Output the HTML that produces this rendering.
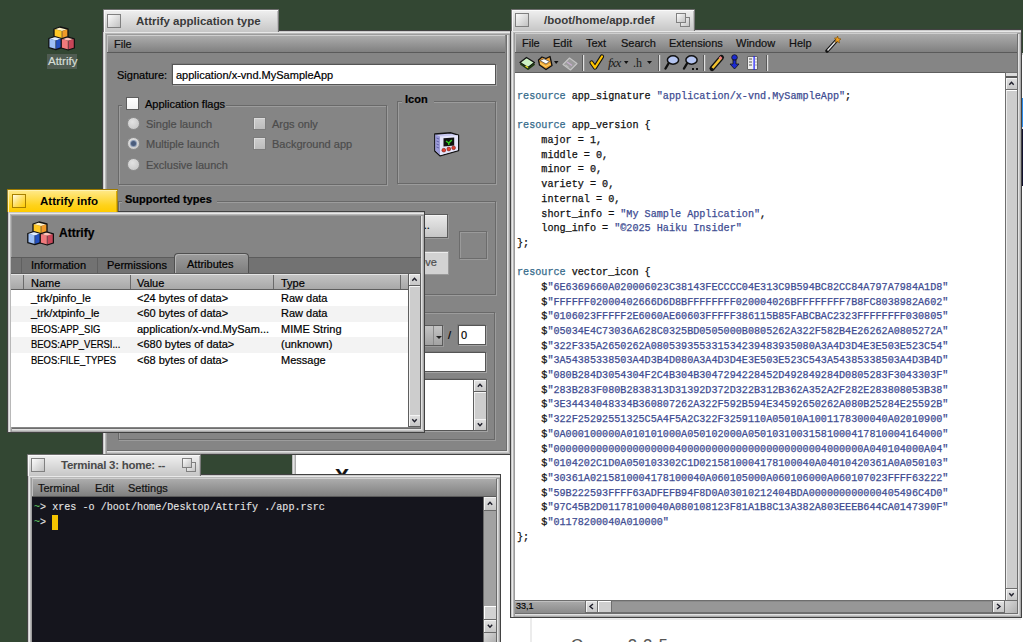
<!DOCTYPE html>
<html><head><meta charset="utf-8">
<style>
*{box-sizing:border-box;margin:0;padding:0}
html,body{width:1023px;height:642px;overflow:hidden;background:#334733;font-family:"Liberation Sans",sans-serif;font-size:11px;color:#000}
.a{position:absolute}
.t{position:absolute;white-space:nowrap;line-height:13px;padding-top:1px;-webkit-text-stroke:0.2px currentColor}
.mono{font-family:"Liberation Mono",monospace}
.tab{position:absolute;background:linear-gradient(#f0f0f0,#c6c6c6);border:1px solid rgba(0,0,0,.45);border-bottom:none;box-shadow:inset 1px 1px 0 #fafafa,inset -1px 0 0 #bdbdbd}
.tab.act{background:linear-gradient(#ffe98c,#ffd21a 70%,#ffcb00);border-color:rgba(60,40,0,.5);box-shadow:inset 1px 1px 0 #fff2b0,inset -1px 0 0 #e0b000}
.close{position:absolute;width:14px;height:14px;border:1px solid #808080;background:linear-gradient(135deg,#fbfbfb,#c2c2c2)}
.act .close{border-color:#a88000;background:linear-gradient(135deg,#fffce8,#ffe066 50%,#ffcc00)}
.ttl{position:absolute;font-weight:bold;font-size:11.5px;color:#3a3a3a;white-space:nowrap;line-height:14px}
.zoom{position:absolute;width:15px;height:15px}
.zoom i{position:absolute;border:1px solid #808080;background:linear-gradient(135deg,#fbfbfb,#c2c2c2)}
.frame{position:absolute;background:#858585;border:1px solid rgba(0,0,0,.5);
 box-shadow:inset 1px 1px 0 #cacaca,inset 2px 2px 0 #e8e8e8,inset 3px 3px 0 #b8b8b8,inset 4px 4px 0 #9c9c9c,
 inset -1px -1px 0 #a8a8a8,inset -2px -2px 0 #c6c6c6,inset -3px -3px 0 #e2e2e2,inset -4px -4px 0 #6e6e6e}
.menubar{position:absolute;background:linear-gradient(#acacac,#808080);border-top:1px solid #cfcfcf;border-bottom:1px solid #5a5a5a;box-shadow:inset 1px 0 0 #c0c0c0;white-space:nowrap}
.menubar span{position:absolute;top:2px;font-size:11px;line-height:14px;color:#111;-webkit-text-stroke:0.2px currentColor}
.gbox{position:absolute;border:1px solid #696969;box-shadow:1px 1px 0 #9c9c9c,inset 1px 1px 0 #9c9c9c}
.cb{position:absolute;width:13px;height:13px;border:1px solid #5e5e5e;background:linear-gradient(#fff,#f2f2f2)}
.cbd{position:absolute;width:13px;height:13px;border:1px solid #7c7c7c;background:linear-gradient(#cdcdcd,#bcbcbc);box-shadow:inset 1px 1px 0 #dcdcdc}
.radio{position:absolute;width:13px;height:13px;border-radius:50%;background:radial-gradient(circle at 40% 35%,#e2e2e2,#c2c2c2);border:1px solid #8e8e8e}
.tf{position:absolute;background:#fff;border:1px solid #555;box-shadow:1px 1px 0 #a4a4a4,-1px -1px 0 #7a7a7a}
.dim{color:#4c4c4c}
.btn{position:absolute;background:linear-gradient(#eaeaea,#c6c6c6);border:1px solid #5c5c5c;box-shadow:1px 1px 0 #9a9a9a,inset 1px 1px 0 #f6f6f6}
.btn span{position:absolute;top:5px;line-height:13px;white-space:nowrap;-webkit-text-stroke:0.2px currentColor}
.btn.dis span{color:#4e4e4e}
.kw{color:#356a8a}
.st{color:#3e4c92}
.sarr{position:absolute;background:linear-gradient(#e2e2e2,#c6c6c6);box-shadow:inset 1px 1px 0 #f4f4f4}
.sarr svg{position:absolute;left:0;top:0}
</style></head><body>
<div class="a" style="left:48px;top:26px"><svg width="27" height="26" viewBox="0 0 27 26"><polygon points="6.0,3.0 12.0,1.0 20.0,3.0 14.0,5.0" fill="#fff2c8"/><polygon points="6.0,3.0 14.0,5.0 14.0,14.2 6.0,12.2" fill="#ffc824"/><polygon points="14.0,5.0 20.0,3.0 20.0,12.2 14.0,14.2" fill="#f09a28"/><path d="M14,5 V14.2" stroke="#333" stroke-width="0.6"/><polygon points="6.0,3.0 12.0,1.0 20.0,3.0 20.0,12.2 14.0,14.2 6.0,12.2" fill="none" stroke="#111" stroke-width="1.3" stroke-linejoin="round"/><polygon points="0.8,12.5 6.8,10.5 13.8,12.5 7.8,14.5" fill="#e0ecff"/><polygon points="0.8,12.5 7.8,14.5 7.8,23.7 0.8,21.7" fill="#9ec0f6"/><polygon points="7.8,14.5 13.8,12.5 13.8,21.7 7.8,23.7" fill="#2350c0"/><path d="M7.8,14.5 V23.7" stroke="#333" stroke-width="0.6"/><polygon points="0.8,12.5 6.8,10.5 13.8,12.5 13.8,21.7 7.8,23.7 0.8,21.7" fill="none" stroke="#111" stroke-width="1.3" stroke-linejoin="round"/><polygon points="13.2,12.8 19.4,10.8 26.4,12.8 20.2,14.8" fill="#ffc4b8"/><polygon points="13.2,12.8 20.2,14.8 20.2,24.0 13.2,22.0" fill="#f07a7c"/><polygon points="20.2,14.8 26.4,12.8 26.4,22.0 20.2,24.0" fill="#c84658"/><path d="M20.2,14.8 V24.0" stroke="#333" stroke-width="0.6"/><polygon points="13.2,12.8 19.4,10.8 26.4,12.8 26.4,22.0 20.2,24.0 13.2,22.0" fill="none" stroke="#111" stroke-width="1.3" stroke-linejoin="round"/></svg></div>
<div class="a" style="left:47px;top:54px;width:30px;height:15px;background:#505c52"></div>
<div class="t" style="left:48px;top:54px;color:#d6ded6;font-size:11.5px">Attrify</div>
<div class="a" style="left:292px;top:454px;width:731px;height:188px;background:#fff"></div>
<div class="a" style="left:292px;top:454px;width:4px;height:188px;background:linear-gradient(90deg,#a0a0a0,#e8e8e8,#c8c8c8,#9a9a9a)"></div>
<div class="a" style="left:560px;top:618px;width:463px;height:2px;background:#ececec"></div>
<div class="a" style="left:530px;top:618px;width:2px;height:24px;background:#ececec"></div>
<div class="t" style="left:571px;top:636px;font-size:16px;color:#555;line-height:18px">O</div>
<div class="t" style="left:628px;top:636px;font-size:16px;color:#555;line-height:18px;letter-spacing:1px">3.3.5</div>
<div class="t" style="left:335px;top:465px;font-size:21px;font-weight:bold;color:#111;line-height:20px">X</div>
<div class="a" style="left:1021px;top:53px;width:2px;height:2px;background:#cfcfcf"></div>
<div class="a" style="left:1021px;top:55px;width:2px;height:43px;background:#fff"></div>
<div class="a" style="left:1021px;top:98px;width:2px;height:29px;background:#2a8ae8"></div>
<div class="a" style="left:1021px;top:127px;width:2px;height:2px;background:#dde"></div>
<div class="a" style="left:1021px;top:129px;width:2px;height:57px;background:#12122e"></div>
<div class="a" style="left:1021px;top:186px;width:2px;height:456px;background:#fff"></div>
<div class="frame" style="left:102px;top:30px;width:409px;height:425px;"></div>
<div class="tab" style="left:103px;top:9px;width:176px;height:23px"><div class="close" style="left:3px;top:4px"></div><div class="ttl" style="left:32px;top:4px">Attrify application type</div></div>
<div class="menubar" style="left:107px;top:35px;width:398px;height:18px"><span style="left:7px;top:1px">File</span></div>
<div class="t" style="left:117px;top:68px;">Signature:</div>
<div class="tf" style="left:172px;top:64px;width:324px;height:21px;"></div>
<div class="t" style="left:176px;top:68px;">application/x-vnd.MySampleApp</div>
<div class="gbox" style="left:118px;top:105px;width:269px;height:80px;"></div>
<div class="a" style="left:122px;top:98px;width:104px;height:14px;background:#858585"></div>
<div class="cb" style="left:126px;top:97px;width:13px;height:13px;"></div>
<div class="t" style="left:145px;top:97px;">Application flags</div>
<div class="radio" style="left:127px;top:117px;width:13px;height:13px;"></div>
<div class="t dim" style="left:146px;top:117px;">Single launch</div>
<div class="radio" style="left:127px;top:137px;width:13px;height:13px;"><i style="position:absolute;left:3px;top:3px;width:5px;height:5px;border-radius:50%;background:#4a5c7c;box-shadow:0 0 0 1px #8a9ab4"></i></div>
<div class="t dim" style="left:146px;top:137px;">Multiple launch</div>
<div class="radio" style="left:127px;top:158px;width:13px;height:13px;"></div>
<div class="t dim" style="left:146px;top:158px;">Exclusive launch</div>
<div class="cbd" style="left:253px;top:117px;width:13px;height:13px;"></div>
<div class="t dim" style="left:272px;top:117px;">Args only</div>
<div class="cbd" style="left:253px;top:137px;width:13px;height:13px;"></div>
<div class="t dim" style="left:272px;top:137px;">Background app</div>
<div class="gbox" style="left:397px;top:101px;width:99px;height:83px;"></div>
<div class="a" style="left:402px;top:92px;width:32px;height:14px;background:#858585"></div>
<div class="t" style="left:405px;top:92px;font-weight:bold">Icon</div>
<div class="a" style="left:434px;top:132px"><svg width="26" height="26" viewBox="0 0 26 26">
<polygon points="0.8,2 17,0.8 24.5,3.2 24.5,18.5 6,23.8 0.8,19" fill="#c8c8f0" stroke="#111" stroke-width="1.4" stroke-linejoin="round"/>
<polygon points="6,4.5 24,3.2 24,18.3 6,23.3" fill="#e6e6fa"/>
<polygon points="1.3,2.4 6,4.5 6,23 1.3,18.6" fill="#9c9cd8"/>
<path d="M2.5,6 l2.5,1 M2.5,9 l2.5,1 M2.5,12 l2.5,1 M2.5,15 l2.5,1" stroke="#5a5aa0" stroke-width="0.9"/>
<polygon points="9.5,6.2 20.2,5.6 20.2,13.4 9.5,14.6" fill="#111"/>
<path d="M12,9 L14.8,11 L17.8,8 M14.8,11 L14.8,13" stroke="#32d020" stroke-width="1.4" fill="none"/>
<circle cx="9.8" cy="18.2" r="1.9" fill="#e04030" stroke="#601010" stroke-width="0.5"/>
<circle cx="14.8" cy="17" r="1.9" fill="#e04030" stroke="#601010" stroke-width="0.5"/>
<circle cx="19.6" cy="15.8" r="1.9" fill="#e04030" stroke="#601010" stroke-width="0.5"/>
</svg></div>
<div class="gbox" style="left:118px;top:201px;width:378px;height:94px;"></div>
<div class="a" style="left:122px;top:192px;width:95px;height:14px;background:#858585"></div>
<div class="t" style="left:125px;top:192px;font-weight:bold">Supported types</div>
<div class="gbox" style="left:118px;top:312px;width:377px;height:128px;"></div>
<div class="btn" style="left:369px;top:214px;width:79px;height:24px"><span style="left:31px;top:4px">Add...</span></div>
<div class="btn dis" style="left:369px;top:251px;width:80px;height:24px;background:#d2d2d2;border-color:#9a9a9a;box-shadow:inset 1px 1px 0 #ececec"><span style="left:26px;top:4px">Remove</span></div>
<div class="a" style="left:459px;top:231px;width:28px;height:28px;border:1px solid #6c6c6c;box-shadow:1px 1px 0 #9a9a9a, inset 1px 1px 0 #9a9a9a"></div>
<div class="a" style="left:300px;top:325px;width:143px;height:21px;background:linear-gradient(#c4c4c4,#a2a2a2);border:1px solid #5a5a5a;box-shadow:1px 1px 0 #9a9a9a"></div>
<div class="a" style="left:433px;top:326px;width:1px;height:19px;background:#8a8a8a"></div>
<div class="a" style="left:436px;top:336px;width:0px;height:0px;border-left:3px solid transparent;border-right:3px solid transparent;border-top:3px solid #222"></div>
<div class="t" style="left:448px;top:328px;">/</div>
<div class="tf" style="left:458px;top:325px;width:28px;height:20px;"></div>
<div class="t" style="left:461px;top:328px;">0</div>
<div class="tf" style="left:300px;top:352px;width:186px;height:20px;"></div>
<div class="tf" style="left:300px;top:379px;width:187px;height:52px;"></div>
<div class="a" style="left:473px;top:379px;width:14px;height:52px;background:#5e5e5e"></div>
<div class="sarr" style="left:474px;top:380px;width:12px;height:11px;"><svg width="12" height="11"><path d="M3.8,6.8 L6.0,4.3 L8.2,6.8" stroke="#1e1e2a" stroke-width="1.4" fill="none"/></svg></div>
<div class="a" style="left:474px;top:392px;width:12px;height:27px;background:#cdcdcd;border-top:1px solid #f6f6f6;border-left:1px solid #f0f0f0"></div>
<div class="sarr" style="left:474px;top:419px;width:12px;height:11px;"><svg width="12" height="11"><path d="M3.8,4.2 L6.0,6.7 L8.2,4.2" stroke="#1e1e2a" stroke-width="1.4" fill="none"/></svg></div>
<div class="frame" style="left:510px;top:29px;width:512px;height:589px;"></div>
<div class="tab" style="left:511px;top:9px;width:184px;height:22px"><div class="close" style="left:3px;top:3px"></div><div class="ttl" style="left:32px;top:3px">/boot/home/app.rdef</div><div class="zoom" style="left:164px;top:3px"><i style="left:4px;top:4px;width:10px;height:10px"></i><i style="left:0;top:0;width:10px;height:10px"></i></div></div>
<div class="menubar" style="left:515px;top:33px;width:502px;height:20px"><span style="left:7px">File</span><span style="left:38px">Edit</span><span style="left:71px">Text</span><span style="left:106px">Search</span><span style="left:154px">Extensions</span><span style="left:221px">Window</span><span style="left:274px">Help</span></div>
<div class="a" style="left:515px;top:53px;width:502px;height:20px;background:#858585;border-bottom:1px solid #5e5e5e"></div>
<div class="a" style="left:515px;top:73px;width:490px;height:527px;background:#fff"></div>
<svg class="a" style="left:516px;top:53px" width="501" height="20" viewBox="0 0 501 20">
<g stroke-linejoin="round">
<polygon points="4,9.5 10.5,4.5 18.5,9.5 12,14.5" fill="#cdf2c4" stroke="#111" stroke-width="1.3"/>
<path d="M4.5,10.8 L12,16 L18.5,11" stroke="#1e3a10" stroke-width="1.8" fill="none"/>
<path d="M9.5,13 L12,14.8" stroke="#f0e020" stroke-width="1.4"/>
<path d="M22.5,7 L26,4 L30,5.5 L34,3.5 L36,12.5 L30,16.5 L23.5,12 Z" fill="#eda032" stroke="#111" stroke-width="1.3"/>
<path d="M24,7.5 L28,5.8 L33.5,8.5 L30,11 Z" fill="#fff" stroke="#444" stroke-width="0.7"/>
<path d="M24,10 L29.5,13.5 L34.5,11" stroke="#ffd060" stroke-width="1.2" fill="none"/>
<polygon points="38,8 42.5,8 40.2,11" fill="#111"/>
<polygon points="47,11.5 53.5,5 61,10.5 54.5,17" fill="#9c9c9c" stroke="#c4c4c4" stroke-width="1.1"/>
<path d="M51,9 L56,12.5" stroke="#c8b0d0" stroke-width="1.4"/><path d="M49.5,12 L52.5,14.5" stroke="#bcbcbc" stroke-width="1.4"/>
<rect x="66" y="2" width="1" height="16" fill="#5a5a5a"/><rect x="67" y="2" width="1.2" height="16" fill="#e0e0e0"/>
<path d="M75.5,9.5 L79,14.5 L86,3.5" stroke="#111" stroke-width="4.2" fill="none" stroke-linecap="round"/>
<path d="M75.5,9.5 L79,14.5 L86,3.5" stroke="#ffc400" stroke-width="2.2" fill="none" stroke-linecap="round"/>
<text x="92" y="14" font-family="Liberation Serif" font-style="italic" font-size="13" fill="#1a1a1a" letter-spacing="-1">fxx</text>
<polygon points="108,8 112.5,8 110.2,11" fill="#111"/>
<text x="117" y="14" font-family="Liberation Serif" font-size="12" fill="#1a1a1a">.h</text>
<polygon points="131,8 136,8 133.5,11" fill="#111"/>
<rect x="142" y="2" width="1" height="16" fill="#5a5a5a"/><rect x="143" y="2" width="1.2" height="16" fill="#e0e0e0"/>
<ellipse cx="157" cy="7" rx="5.6" ry="4.2" fill="#b4c4f0" stroke="#111" stroke-width="1.5"/>
<path d="M152.5,10.5 L149.5,15.5" stroke="#111" stroke-width="2.4" stroke-linecap="round"/>
<ellipse cx="175.5" cy="7" rx="5.6" ry="4.2" fill="#b4c4f0" stroke="#111" stroke-width="1.5"/>
<path d="M171,10.5 L168,15.5" stroke="#111" stroke-width="2.4" stroke-linecap="round"/>
<rect x="176" y="15" width="2" height="2" fill="#111"/><rect x="180" y="15" width="2" height="2" fill="#111"/>
<rect x="187" y="2" width="1" height="16" fill="#5a5a5a"/><rect x="188" y="2" width="1.2" height="16" fill="#e0e0e0"/>
<path d="M196,15.5 L205.5,4.5" stroke="#111" stroke-width="5" stroke-linecap="round"/>
<path d="M196.5,15 L205,5" stroke="#f4c430" stroke-width="2.6"/>
<path d="M203.5,6 L205.5,4" stroke="#f08080" stroke-width="2.6"/>
<circle cx="218.5" cy="4.5" r="2.8" fill="#1a2ad0" stroke="#111" stroke-width="0.8"/>
<path d="M217,7 L220,7 L220,11 L223,11 L218.5,16 L214,11 L217,11 Z" fill="#1a2ad0" stroke="#111" stroke-width="0.8"/>
<rect x="231.5" y="3.5" width="10" height="13" fill="#efefef" stroke="#666" stroke-width="1"/>
<path d="M233,6 h3 M233,9 h3 M233,12 h3 M239.5,6 h1 M239.5,9 h1 M239.5,12 h1" stroke="#555" stroke-width="1"/>
<rect x="237.5" y="3" width="1.2" height="14" fill="#2020ff"/>
<rect x="250" y="2" width="1" height="16" fill="#5a5a5a"/><rect x="251" y="2" width="1.2" height="16" fill="#e0e0e0"/>
</g></svg>
<svg class="a" style="left:824px;top:35px" width="20" height="18" viewBox="0 0 20 18">
<path d="M3,16 L13,5" stroke="#111" stroke-width="3.4" stroke-linecap="round"/>
<path d="M3.5,15.5 L12.5,5.5" stroke="#e8e8e8" stroke-width="1.4"/>
<path d="M13.5,1 L14.5,3.5 L17,4 L15,5.5 L15.5,8 L13.5,6.5 L11,7.5 L12,5 L10.5,3 L13,3 Z" fill="#f0a020" stroke="#7a4a00" stroke-width="0.6"/>
</svg>
<pre class="a mono" style="left:517px;top:90px;font-size:10.14px;line-height:14.69px;color:#111;-webkit-text-stroke:0.25px currentColor"><span class="kw">resource</span> app_signature <span class="st">&quot;application/x-vnd.MySampleApp&quot;</span>;

<span class="kw">resource</span> app_version {
    major = 1,
    middle = 0,
    minor = 0,
    variety = 0,
    internal = 0,
    short_info = <span class="st">&quot;My Sample Application&quot;</span>,
    long_info = <span class="st">&quot;©2025 Haiku Insider&quot;</span>
};

<span class="kw">resource</span> vector_icon {
    $<span class="st">&quot;6E6369660A020006023C38143FECCCC04E313C9B594BC82CC84A797A7984A1D8&quot;</span>
    $<span class="st">&quot;FFFFFF02000402666D6D8BFFFFFFFF020004026BFFFFFFFF7B8FC8038982A602&quot;</span>
    $<span class="st">&quot;0106023FFFFF2E6060AE60603FFFFF386115B85FABCBAC2323FFFFFFFF030805&quot;</span>
    $<span class="st">&quot;05034E4C73036A628C0325BD0505000B0805262A322F582B4E26262A0805272A&quot;</span>
    $<span class="st">&quot;322F335A2650262A080539355331534239483935080A3A4D3D4E3E503E523C54&quot;</span>
    $<span class="st">&quot;3A54385338503A4D3B4D080A3A4D3D4E3E503E523C543A54385338503A4D3B4D&quot;</span>
    $<span class="st">&quot;080B284D3054304F2C4B304B3047294228452D492849284D0805283F3043303F&quot;</span>
    $<span class="st">&quot;283B283F080B2838313D31392D372D322B312B362A352A2F282E283808053B38&quot;</span>
    $<span class="st">&quot;3E34434048334B360807262A322F592B594E34592650262A080B25284E25592B&quot;</span>
    $<span class="st">&quot;322F25292551325C5A4F5A2C322F3259110A05010A1001178300040A02010900&quot;</span>
    $<span class="st">&quot;0A000100000A010101000A050102000A05010310031581000417810004164000&quot;</span>
    $<span class="st">&quot;000000000000000000004000000000000000000000004000000A040104000A04&quot;</span>
    $<span class="st">&quot;0104202C1D0A050103302C1D0215810004178100040A04010420361A0A050103&quot;</span>
    $<span class="st">&quot;30361A0215810004178100040A060105000A060106000A060107023FFFF63222&quot;</span>
    $<span class="st">&quot;59B222593FFFF63ADFEFB94F8D0A03010212404BDA000000000000405496C4D0&quot;</span>
    $<span class="st">&quot;97C45B2D01178100040A080108123F81A1B8C13A382A803EEEB644CA0147390F&quot;</span>
    $<span class="st">&quot;01178200040A010000&quot;</span>
};</pre>
<div class="a" style="left:1005px;top:72px;width:12px;height:529px;background:#6e6e6e"></div>
<div class="a" style="left:1006px;top:73px;width:11px;height:3px;background:#dcdcdc"></div>
<div class="a" style="left:1006px;top:76px;width:11px;height:2px;background:#5a5a5a"></div>
<div class="sarr" style="left:1006px;top:78px;width:11px;height:11px;"><svg width="11" height="11"><path d="M3.3,6.8 L5.5,4.3 L7.7,6.8" stroke="#1e1e2a" stroke-width="1.4" fill="none"/></svg></div>
<div class="a" style="left:1006px;top:90px;width:11px;height:498px;background:#cdcdcd;border-top:1px solid #fff;border-left:1px solid #ececec"></div>
<div class="sarr" style="left:1006px;top:589px;width:11px;height:11px;"><svg width="11" height="11"><path d="M3.3,4.2 L5.5,6.7 L7.7,4.2" stroke="#1e1e2a" stroke-width="1.4" fill="none"/></svg></div>
<div class="a" style="left:515px;top:600px;width:502px;height:13px;background:#6e6e6e"></div>
<div class="a" style="left:515px;top:601px;width:70px;height:12px;background:linear-gradient(#a8a8a8,#8a8a8a);border-top:1px solid #c0c0c0"></div>
<div class="t" style="left:516px;top:601px;font-size:9px;line-height:11px;padding-top:0">33,1</div>
<div class="sarr" style="left:586px;top:601px;width:11px;height:11px;"><svg width="11" height="11"><path d="M7.0,3.0 L4.0,5.5 L7.0,8.0" stroke="#1e1e2a" stroke-width="1.4" fill="none"/></svg></div>
<div class="a" style="left:598px;top:601px;width:13px;height:11px;background:#cfcfcf;border-top:1px solid #fff;border-left:1px solid #fff"></div>
<div class="a" style="left:612px;top:601px;width:380px;height:11px;background:#979797;border-top:1px solid #8a8a8a"></div>
<div class="sarr" style="left:993px;top:601px;width:11px;height:11px;"><svg width="11" height="11"><path d="M4.0,3.0 L7.0,5.5 L4.0,8.0" stroke="#1e1e2a" stroke-width="1.4" fill="none"/></svg></div>
<div class="a" style="left:1005px;top:601px;width:12px;height:12px;background:linear-gradient(135deg,#dadada,#b0b0b0)"></div>
<div class="frame" style="left:27px;top:474px;width:474px;height:180px;"></div>
<div class="tab" style="left:27px;top:454px;width:174px;height:22px"><div class="close" style="left:3px;top:3px"></div><div class="ttl" style="left:33px;top:3px;color:#4a4a4a;letter-spacing:-0.25px">Terminal 3: home: --</div><div class="zoom" style="left:154px;top:3px"><i style="left:4px;top:4px;width:10px;height:10px"></i><i style="left:0;top:0;width:10px;height:10px"></i></div></div>
<div class="menubar" style="left:32px;top:478px;width:464px;height:19px"><span style="left:6px">Terminal</span><span style="left:63px">Edit</span><span style="left:96px">Settings</span></div>
<div class="a" style="left:32px;top:497px;width:452px;height:145px;background:#15151d"></div>
<pre class="a mono" style="left:34px;top:501px;font-size:10.1px;line-height:14.7px;color:#e6e6e6;-webkit-text-stroke:0.1px currentColor"><span style="color:#5fbf5f">~</span>&gt; xres -o /boot/home/Desktop/Attrify ./app.rsrc
<span style="color:#5fbf5f">~</span>&gt; </pre>
<div class="a" style="left:52px;top:515px;width:6px;height:15px;background:#f4c400"></div>
<div class="a" style="left:483px;top:497px;width:14px;height:145px;background:#6a6a6a"></div>
<div class="sarr" style="left:484px;top:497px;width:12px;height:13px;"><svg width="12" height="13"><path d="M3.8,7.8 L6.0,5.3 L8.2,7.8" stroke="#1e1e2a" stroke-width="1.4" fill="none"/></svg></div>
<div class="a" style="left:484px;top:511px;width:12px;height:95px;background:#a2a2a2"></div>
<div class="a" style="left:484px;top:606px;width:12px;height:13px;background:#d2d2d2;border-top:1px solid #fff;border-left:1px solid #fff"></div>
<div class="sarr" style="left:484px;top:620px;width:12px;height:12px;"><svg width="12" height="12"><path d="M3.8,4.7 L6.0,7.2 L8.2,4.7" stroke="#1e1e2a" stroke-width="1.4" fill="none"/></svg></div>
<div class="a" style="left:484px;top:633px;width:12px;height:9px;background:linear-gradient(135deg,#d8d8d8,#b0b0b0)"></div>
<div class="frame" style="left:7px;top:211px;width:418px;height:222px;"></div>
<div class="tab act" style="left:7px;top:189px;width:111px;height:23px"><div class="close" style="left:4px;top:4px"></div><div class="ttl" style="left:32px;top:4px;color:#000">Attrify info</div></div>
<div class="a" style="left:12px;top:216px;width:408px;height:41px;background:#858585"></div>
<div class="a" style="left:27px;top:221px"><svg width="27" height="26" viewBox="0 0 27 26"><polygon points="6.0,3.0 12.0,1.0 20.0,3.0 14.0,5.0" fill="#fff2c8"/><polygon points="6.0,3.0 14.0,5.0 14.0,14.2 6.0,12.2" fill="#ffc824"/><polygon points="14.0,5.0 20.0,3.0 20.0,12.2 14.0,14.2" fill="#f09a28"/><path d="M14,5 V14.2" stroke="#333" stroke-width="0.6"/><polygon points="6.0,3.0 12.0,1.0 20.0,3.0 20.0,12.2 14.0,14.2 6.0,12.2" fill="none" stroke="#111" stroke-width="1.3" stroke-linejoin="round"/><polygon points="0.8,12.5 6.8,10.5 13.8,12.5 7.8,14.5" fill="#e0ecff"/><polygon points="0.8,12.5 7.8,14.5 7.8,23.7 0.8,21.7" fill="#9ec0f6"/><polygon points="7.8,14.5 13.8,12.5 13.8,21.7 7.8,23.7" fill="#2350c0"/><path d="M7.8,14.5 V23.7" stroke="#333" stroke-width="0.6"/><polygon points="0.8,12.5 6.8,10.5 13.8,12.5 13.8,21.7 7.8,23.7 0.8,21.7" fill="none" stroke="#111" stroke-width="1.3" stroke-linejoin="round"/><polygon points="13.2,12.8 19.4,10.8 26.4,12.8 20.2,14.8" fill="#ffc4b8"/><polygon points="13.2,12.8 20.2,14.8 20.2,24.0 13.2,22.0" fill="#f07a7c"/><polygon points="20.2,14.8 26.4,12.8 26.4,22.0 20.2,24.0" fill="#c84658"/><path d="M20.2,14.8 V24.0" stroke="#333" stroke-width="0.6"/><polygon points="13.2,12.8 19.4,10.8 26.4,12.8 26.4,22.0 20.2,24.0 13.2,22.0" fill="none" stroke="#111" stroke-width="1.3" stroke-linejoin="round"/></svg></div>
<div class="t" style="left:59px;top:226px;font-weight:bold;font-size:12px">Attrify</div>
<div class="a" style="left:11px;top:257px;width:410px;height:17px;background:#727272;border-top:1px solid #5c5c5c"></div>
<div class="a" style="left:21px;top:258px;width:1px;height:16px;background:#606060"></div>
<div class="a" style="left:97px;top:258px;width:1px;height:16px;background:#606060"></div>
<div class="t" style="left:31px;top:258px;">Information</div>
<div class="t" style="left:107px;top:258px;">Permissions</div>
<div class="a" style="left:174px;top:253px;width:75px;height:21px;border:1px solid #505050;border-bottom:none;border-radius:4px 4px 0 0;background:linear-gradient(#9c9c9c,#7c7c7c);box-shadow:inset 1px 1px 0 #b4b4b4"></div>
<div class="t" style="left:187px;top:257px;">Attributes</div>
<div class="a" style="left:11px;top:273px;width:398px;height:17px;background:linear-gradient(#c4c4c4,#a8a8a8);border-top:1px solid #5e5e5e;box-shadow:inset 0 1px 0 #e4e4e4;border-bottom:1px solid #5e5e5e"></div>
<div class="a" style="left:23px;top:275px;width:1px;height:14px;background:#6a6a6a"></div>
<div class="a" style="left:130px;top:275px;width:1px;height:14px;background:#6a6a6a"></div>
<div class="a" style="left:273px;top:275px;width:1px;height:14px;background:#6a6a6a"></div>
<div class="a" style="left:400px;top:275px;width:1px;height:14px;background:#6a6a6a"></div>
<div class="t" style="left:31px;top:276px;">Name</div>
<div class="t" style="left:137px;top:276px;">Value</div>
<div class="t" style="left:281px;top:276px;">Type</div>
<div class="a" style="left:11px;top:290px;width:398px;height:137px;background:#fff"></div>
<div class="a" style="left:11px;top:306px;width:398px;height:16px;background:#f3f3f3"></div>
<div class="a" style="left:11px;top:337px;width:398px;height:16px;background:#f3f3f3"></div>
<div class="t" style="left:31px;top:291.0px;">_trk/pinfo_le</div>
<div class="t" style="left:137px;top:291.0px;">&lt;24 bytes of data&gt;</div>
<div class="t" style="left:281px;top:291.0px;">Raw data</div>
<div class="t" style="left:31px;top:306.4px;">_trk/xtpinfo_le</div>
<div class="t" style="left:137px;top:306.4px;">&lt;60 bytes of data&gt;</div>
<div class="t" style="left:281px;top:306.4px;">Raw data</div>
<div class="t" style="left:31px;top:321.8px;transform:scaleX(0.86);transform-origin:0 0">BEOS:APP_SIG</div>
<div class="t" style="left:137px;top:321.8px;">application/x-vnd.MySam...</div>
<div class="t" style="left:281px;top:321.8px;">MIME String</div>
<div class="t" style="left:31px;top:337.2px;transform:scaleX(0.86);transform-origin:0 0">BEOS:APP_VERSI...</div>
<div class="t" style="left:137px;top:337.2px;">&lt;680 bytes of data&gt;</div>
<div class="t" style="left:281px;top:337.2px;">(unknown)</div>
<div class="t" style="left:31px;top:352.6px;transform:scaleX(0.86);transform-origin:0 0">BEOS:FILE_TYPES</div>
<div class="t" style="left:137px;top:352.6px;">&lt;68 bytes of data&gt;</div>
<div class="t" style="left:281px;top:352.6px;">Message</div>
<div class="a" style="left:408px;top:273px;width:13px;height:154px;background:#5e5e5e"></div>
<div class="sarr" style="left:409px;top:274px;width:11px;height:11px;"><svg width="11" height="11"><path d="M3.3,6.8 L5.5,4.3 L7.7,6.8" stroke="#1e1e2a" stroke-width="1.4" fill="none"/></svg></div>
<div class="a" style="left:409px;top:286px;width:11px;height:129px;background:#cdcdcd;border-top:1px solid #f6f6f6;border-left:1px solid #f0f0f0"></div>
<div class="sarr" style="left:409px;top:415px;width:11px;height:11px;"><svg width="11" height="11"><path d="M3.3,4.2 L5.5,6.7 L7.7,4.2" stroke="#1e1e2a" stroke-width="1.4" fill="none"/></svg></div>
</body></html>
